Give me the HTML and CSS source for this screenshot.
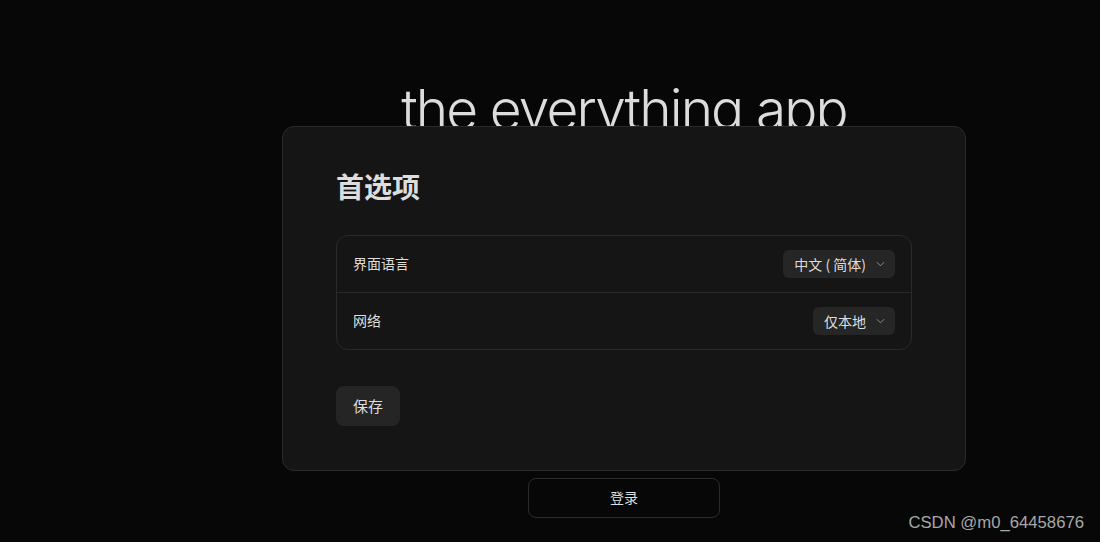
FILE: index.html
```html
<!DOCTYPE html>
<html lang="zh-CN">
<head>
    <meta charset="UTF-8">
    <meta name="viewport" content="width=device-width, initial-scale=1.0">
    <title>the everything app</title>
    <link rel="stylesheet" href="styles.css">
</head>
<body>
    <main class="landing">
        <h1 class="hero-title">the everything app</h1>
        <button class="login-btn" type="button">登录</button>
    </main>

    <div class="prefs-dialog">
        <h2 class="prefs-title">首选项</h2>
        <div class="prefs-list">
            <div class="prefs-row">
                <span class="prefs-label">界面语言</span>
                <button class="pill-select" type="button">
                    中文 ( 简体)
                    <svg class="chevron" viewBox="0 0 10 6" width="9" height="6"><path d="M1 1l4 4 4-4" fill="none" stroke="currentColor" stroke-width="1.1"/></svg>
                </button>
            </div>
            <div class="prefs-row">
                <span class="prefs-label">网络</span>
                <button class="pill-select" type="button">
                    仅本地
                    <svg class="chevron" viewBox="0 0 10 6" width="9" height="6"><path d="M1 1l4 4 4-4" fill="none" stroke="currentColor" stroke-width="1.1"/></svg>
                </button>
            </div>
        </div>
        <button class="save-btn" type="button">保存</button>
    </div>

    <div class="watermark">CSDN @m0_64458676</div>
</body>
</html>
```

FILE: styles.css
```css
html, body {
    margin: 0;
    height: 100%;
}
body {
    background: #070707;
    color: #dedede;
    font-family: Inter, "Noto Sans CJK SC", sans-serif;
    overflow: hidden;
}
.landing {
    margin-left: 148px;
    display: flex;
    flex-direction: column;
    align-items: center;
    padding-top: 74px;
}
.hero-title {
    margin: 0;
    font-family: Inter, sans-serif;
    font-weight: 300;
    font-size: 55px;
    letter-spacing: -0.034em;
    line-height: 70px;
    color: #dcdcdc;
}
.login-btn {
    margin-top: 334px;
    width: 192px;
    height: 40px;
    background: transparent;
    border: 1px solid #2b2b2b;
    border-radius: 8px;
    color: #dedede;
    font-family: "Noto Sans CJK SC", sans-serif;
    font-size: 14px;
    line-height: 1;
    padding: 0 0 2px;
}

/* preferences dialog sits over the landing page */
.prefs-dialog {
    position: absolute;
    top: 126px;
    left: 282px;
    width: 684px;
    height: 345px;
    box-sizing: border-box;
    padding: 40px 53px 44px 53px;
    background: #151515;
    border: 1px solid #2a2a2a;
    border-radius: 12px;
    display: flex;
    flex-direction: column;
    align-items: flex-start;
}
.prefs-title {
    margin: 0 0 28px;
    font-family: "Noto Sans CJK SC", sans-serif;
    font-size: 28px;
    font-weight: 700;
    line-height: 38px;
    color: #dddddd;
}
.prefs-list {
    align-self: stretch;
    margin-top: 2px;
    border: 1px solid #2a2a2a;
    border-radius: 12px;
}
.prefs-row {
    display: flex;
    align-items: center;
    justify-content: space-between;
    height: 56px;
    padding: 0 16px;
}
.prefs-row + .prefs-row {
    border-top: 1px solid #2a2a2a;
}
.prefs-label {
    font-family: "Noto Sans CJK SC", sans-serif;
    font-size: 14px;
    line-height: 20px;
    margin-top: -2px;
    color: #dedede;
}
.pill-select {
    display: flex;
    align-items: center;
    gap: 10px;
    height: 28px;
    padding: 0 10px 1px 11px;
    background: #262626;
    border: none;
    border-radius: 6px;
    color: #dedede;
    font-family: "Noto Sans CJK SC", sans-serif;
    font-size: 14px;
    line-height: 1;
}
.chevron {
    color: #8f8f8f;
}
.save-btn {
    margin-top: auto;
    width: 64px;
    height: 40px;
    background: #252525;
    border: none;
    border-radius: 8px;
    color: #dedede;
    font-family: "Noto Sans CJK SC", sans-serif;
    font-size: 15px;
    line-height: 1;
    padding: 0 0 2px;
}
.watermark {
    position: absolute;
    right: 16px;
    bottom: 9px;
    font-family: "Liberation Sans", Arial, sans-serif;
    font-size: 16.7px;
    color: #a8a8a8;
}
```
